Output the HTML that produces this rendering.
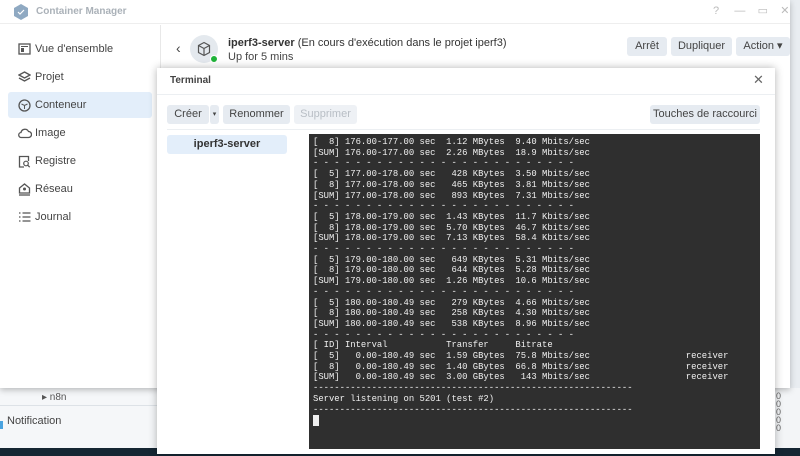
<!DOCTYPE html>
<html><head><meta charset="utf-8"><style>
*{box-sizing:border-box;margin:0;padding:0}
body{width:800px;height:456px;overflow:hidden;background:#e9edf1;font-family:"Liberation Sans",sans-serif;position:relative;font-size:12px;color:#333}
.abs{position:absolute}
.btn{position:absolute;background:#e6ebf1;border-radius:3px;font-size:11px;color:#444;text-align:center;line-height:19px;height:19px}
.nav{position:absolute;left:8px;width:144px;height:26px;line-height:26px;padding-left:27px;font-size:11px;color:#444;border-radius:3px}
.nav svg{position:absolute;left:10px;top:7px}
pre{font-family:"Liberation Mono",monospace;font-size:8.88px;line-height:10.7px;color:#f0f0f0}
</style></head><body>
<div class="abs" style="left:0;top:388px;width:800px;height:60px;background:#f5f7f9"></div>
<div class="abs" style="left:0;top:405px;width:160px;height:1px;background:#dde2e7"></div>
<div class="abs" style="left:42px;top:392px;font-size:10px;color:#555">▸ n8n</div>
<div class="abs" style="left:0;top:421px;width:3px;height:8px;background:#4aa3e0"></div>
<div class="abs" style="left:7px;top:415px;font-size:11px;color:#444">Notification</div>
<div class="abs" style="left:0;top:448px;width:800px;height:8px;background:#152633"></div>
<div class="abs" style="left:775px;top:388px;width:25px;height:60px;background:#f3f5f7"></div>
<div class="abs" style="left:776px;top:392px;font-size:9px;color:#666;line-height:8px">0<br>0<br>0<br>0<br>0</div>
<div class="abs" style="left:0;top:0;width:790px;height:388px;background:#fff;box-shadow:0 2px 6px rgba(0,0,0,.25)">
 <div class="abs" style="left:0;top:0;width:790px;height:24px;border-bottom:1px solid #eee"></div>
 <svg class="abs" style="left:14px;top:4px" width="14" height="16" viewBox="0 0 14 16"><path d="M7 0L14 4V12L7 16L0 12V4Z" fill="#8fa9c2"/><path d="M4 8l2 2 4-4" stroke="#fff" stroke-width="1.2" fill="none"/></svg>
 <div class="abs" style="left:36px;top:6px;font-size:10px;font-weight:bold;color:#aab1b8">Container Manager</div>
 <div class="abs" style="left:713px;top:4px;font-size:11px;color:#bbb">?&nbsp;&nbsp;&nbsp;&nbsp;&nbsp;—&nbsp;&nbsp;&nbsp;&nbsp;▭&nbsp;&nbsp;&nbsp;&nbsp;✕</div>
 <div class="abs" style="left:160px;top:25px;width:1px;height:363px;background:#e8e8e8"></div>
 <div class="nav" style="top:36px"><svg width="13" height="12"><rect x="1" y="1" width="11" height="10" fill="none" stroke="#555" stroke-width="1.3"/><rect x="3" y="5" width="3" height="4" fill="#555"/><line x1="3" y1="3.5" x2="10" y2="3.5" stroke="#555"/></svg>Vue d'ensemble</div>
 <div class="nav" style="top:64px"><svg width="13" height="13"><path d="M6.5 1L12 4 6.5 7 1 4Z M1 7l5.5 3 5.5-3" fill="none" stroke="#555" stroke-width="1.3"/></svg>Projet</div>
 <div class="nav" style="top:92px;background:#e3eefa"><svg width="13" height="13"><circle cx="6.5" cy="6.5" r="5.5" fill="none" stroke="#555" stroke-width="1.3"/><path d="M3.5 5l3 1.5 3-1.5M6.5 6.5v3.5" fill="none" stroke="#555"/></svg>Conteneur</div>
 <div class="nav" style="top:120px"><svg width="14" height="12"><path d="M3.5 10.5h7a3 3 0 0 0 0-6 4 4 0 0 0-7.5 1A2.5 2.5 0 0 0 3.5 10.5Z" fill="none" stroke="#555" stroke-width="1.3"/></svg>Image</div>
 <div class="nav" style="top:148px"><svg width="13" height="13"><path d="M6 12H1.5V1.5h9V6" fill="none" stroke="#555" stroke-width="1.3"/><circle cx="8" cy="8.5" r="2.3" fill="none" stroke="#555" stroke-width="1.2"/><path d="M9.7 10.2l2 2" stroke="#555" stroke-width="1.3"/></svg>Registre</div>
 <div class="nav" style="top:176px"><svg width="13" height="13"><path d="M1.5 5L6.5 1 11.5 5V10H1.5Z" fill="none" stroke="#555" stroke-width="1.3"/><circle cx="6.5" cy="6" r="1.5" fill="#555"/><path d="M1 12h11" stroke="#555" stroke-width="1.3"/></svg>Réseau</div>
 <div class="nav" style="top:204px"><svg width="13" height="12"><path d="M1 2h1.5M1 6h1.5M1 10h1.5M4.5 2h8M4.5 6h8M4.5 10h8" stroke="#555" stroke-width="1.3"/></svg>Journal</div>
 <div class="abs" style="left:176px;top:40px;font-size:14px;color:#444">‹</div>
 <div class="abs" style="left:190px;top:35px;width:28px;height:28px;border-radius:50%;background:#e4e9ee"></div>
 <svg class="abs" style="left:196px;top:41px" width="16" height="16"><path d="M8 1.5l5.5 3v7L8 14.5 2.5 11.5v-7Z M2.5 4.5L8 7.5l5.5-3M8 7.5v7" fill="none" stroke="#555" stroke-width="1.2"/></svg>
 <div class="abs" style="left:210px;top:55px;width:8px;height:8px;border-radius:50%;background:#1fb339;border:1px solid #fff"></div>
 <div class="abs" style="left:228px;top:37px;font-size:11px;color:#333"><b>iperf3-server</b> (En cours d'exécution dans le projet iperf3)</div>
 <div class="abs" style="left:228px;top:51px;font-size:11px;color:#444">Up for 5 mins</div>
 <div class="btn" style="left:627px;top:37px;width:40px">Arrêt</div>
 <div class="btn" style="left:671px;top:37px;width:61px">Dupliquer</div>
 <div class="btn" style="left:736px;top:37px;width:54px">Action ▾</div>
</div>
<div class="abs" style="left:157px;top:68px;width:618px;height:386px;background:#fff;box-shadow:0 0 8px rgba(0,0,0,.3)">
 <div class="abs" style="left:13px;top:7px;font-size:10px;font-weight:bold;color:#444">Terminal</div>
 <div class="abs" style="left:596px;top:4px;font-size:13px;color:#666">✕</div>
 <div class="abs" style="left:0;top:26px;width:618px;height:1px;background:#eceff2"></div>
 <div class="btn" style="left:10px;top:37px;width:42px">Créer</div>
 <div class="btn" style="left:52px;top:37px;width:10px;border-left:1px solid #fff;font-size:7px">▾</div>
 <div class="btn" style="left:66px;top:37px;width:67px">Renommer</div>
 <div class="btn" style="left:137px;top:37px;width:63px;color:#b8bec5;background:#eef1f5">Supprimer</div>
 <div class="btn" style="left:493px;top:37px;width:110px">Touches de raccourci</div>
 <div class="abs" style="left:10px;top:61px;width:593px;height:1px;background:#eceff2"></div>
 <div class="abs" style="left:10px;top:67px;width:120px;height:19px;background:#e3eefa;border-radius:3px;text-align:center;line-height:19px;font-size:11px;font-weight:bold;color:#333">iperf3-server</div>
 <div class="abs" style="left:152px;top:66px;width:451px;height:315px;background:#2f2f2f;padding:3px 0 0 4px"><pre>[  8] 176.00-177.00 sec  1.12 MBytes  9.40 Mbits/sec
[SUM] 176.00-177.00 sec  2.26 MBytes  18.9 Mbits/sec
- - - - - - - - - - - - - - - - - - - - - - - - -
[  5] 177.00-178.00 sec   428 KBytes  3.50 Mbits/sec
[  8] 177.00-178.00 sec   465 KBytes  3.81 Mbits/sec
[SUM] 177.00-178.00 sec   893 KBytes  7.31 Mbits/sec
- - - - - - - - - - - - - - - - - - - - - - - - -
[  5] 178.00-179.00 sec  1.43 KBytes  11.7 Kbits/sec
[  8] 178.00-179.00 sec  5.70 KBytes  46.7 Kbits/sec
[SUM] 178.00-179.00 sec  7.13 KBytes  58.4 Kbits/sec
- - - - - - - - - - - - - - - - - - - - - - - - -
[  5] 179.00-180.00 sec   649 KBytes  5.31 Mbits/sec
[  8] 179.00-180.00 sec   644 KBytes  5.28 Mbits/sec
[SUM] 179.00-180.00 sec  1.26 MBytes  10.6 Mbits/sec
- - - - - - - - - - - - - - - - - - - - - - - - -
[  5] 180.00-180.49 sec   279 KBytes  4.66 Mbits/sec
[  8] 180.00-180.49 sec   258 KBytes  4.30 Mbits/sec
[SUM] 180.00-180.49 sec   538 KBytes  8.96 Mbits/sec
- - - - - - - - - - - - - - - - - - - - - - - - -
[ ID] Interval           Transfer     Bitrate
[  5]   0.00-180.49 sec  1.59 GBytes  75.8 Mbits/sec                  receiver
[  8]   0.00-180.49 sec  1.40 GBytes  66.8 Mbits/sec                  receiver
[SUM]   0.00-180.49 sec  3.00 GBytes   143 Mbits/sec                  receiver
------------------------------------------------------------
Server listening on 5201 (test #2)
------------------------------------------------------------
<span style="display:inline-block;width:6px;height:11px;background:#eee;vertical-align:top"></span></pre></div>
</div>
</body></html>
